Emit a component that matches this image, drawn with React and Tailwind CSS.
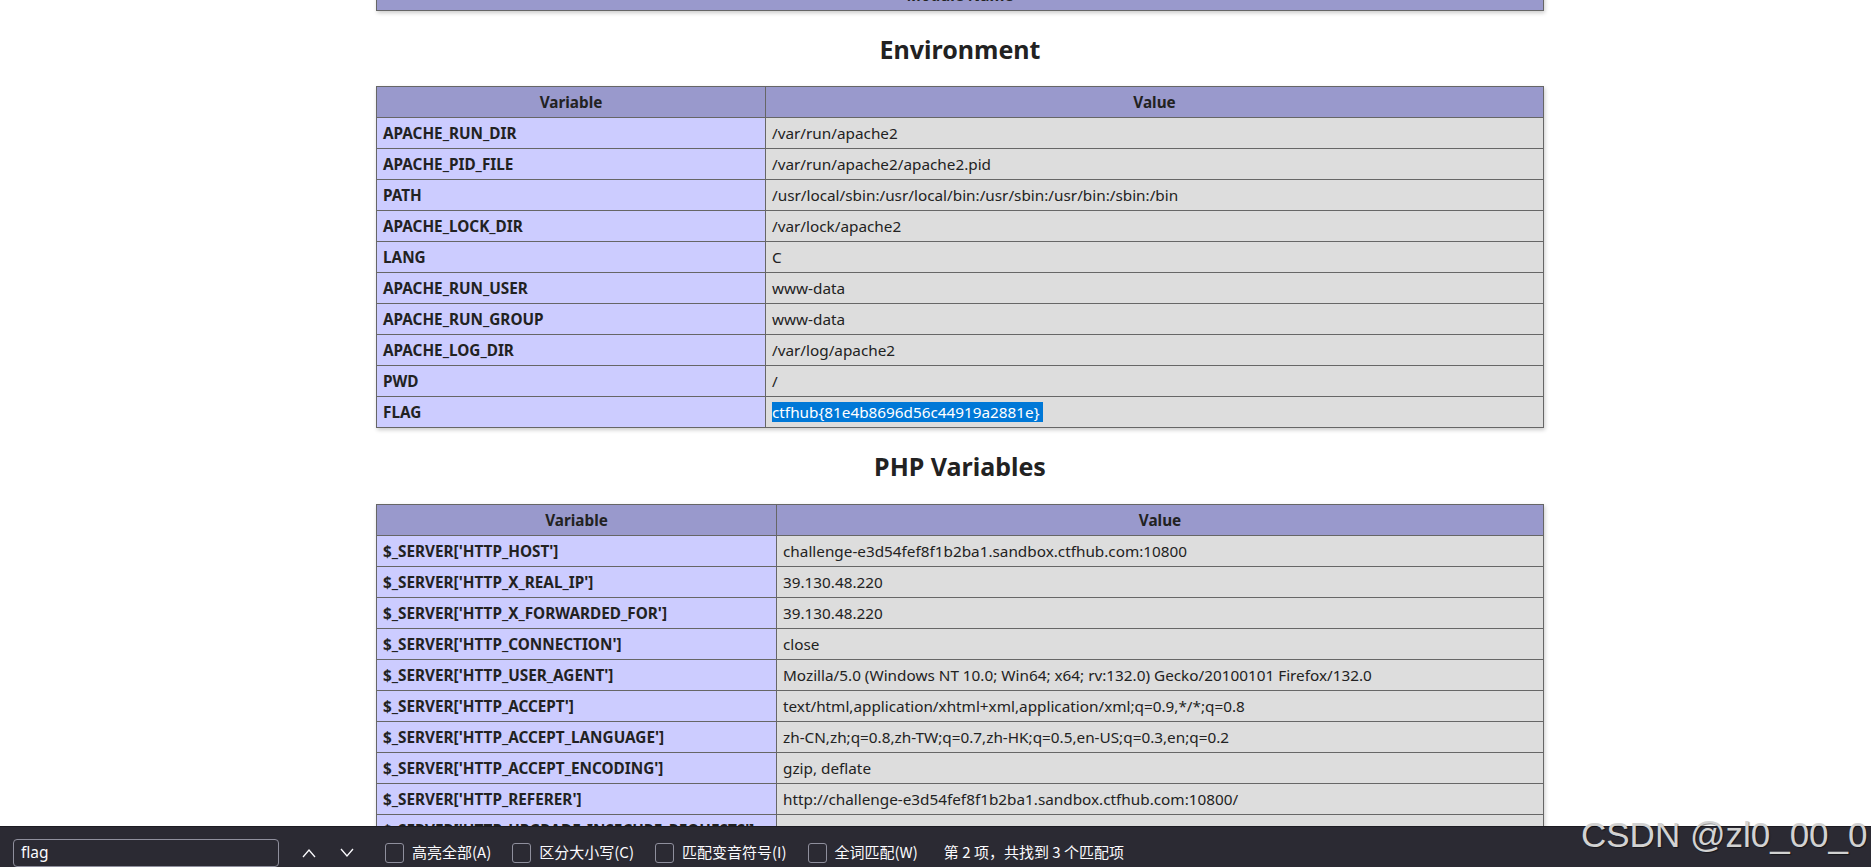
import React from 'react';

const envRows = [
  ['APACHE_RUN_DIR', '/var/run/apache2'],
  ['APACHE_PID_FILE', '/var/run/apache2/apache2.pid'],
  ['PATH', '/usr/local/sbin:/usr/local/bin:/usr/sbin:/usr/bin:/sbin:/bin'],
  ['APACHE_LOCK_DIR', '/var/lock/apache2'],
  ['LANG', 'C'],
  ['APACHE_RUN_USER', 'www-data'],
  ['APACHE_RUN_GROUP', 'www-data'],
  ['APACHE_LOG_DIR', '/var/log/apache2'],
  ['PWD', '/'],
  ['FLAG', 'ctfhub{81e4b8696d56c44919a2881e}'],
];

const phpRows = [
  ["$_SERVER['HTTP_HOST']", 'challenge-e3d54fef8f1b2ba1.sandbox.ctfhub.com:10800'],
  ["$_SERVER['HTTP_X_REAL_IP']", '39.130.48.220'],
  ["$_SERVER['HTTP_X_FORWARDED_FOR']", '39.130.48.220'],
  ["$_SERVER['HTTP_CONNECTION']", 'close'],
  ["$_SERVER['HTTP_USER_AGENT']", 'Mozilla/5.0 (Windows NT 10.0; Win64; x64; rv:132.0) Gecko/20100101 Firefox/132.0'],
  ["$_SERVER['HTTP_ACCEPT']", 'text/html,application/xhtml+xml,application/xml;q=0.9,*/*;q=0.8'],
  ["$_SERVER['HTTP_ACCEPT_LANGUAGE']", 'zh-CN,zh;q=0.8,zh-TW;q=0.7,zh-HK;q=0.5,en-US;q=0.3,en;q=0.2'],
  ["$_SERVER['HTTP_ACCEPT_ENCODING']", 'gzip, deflate'],
  ["$_SERVER['HTTP_REFERER']", 'http://challenge-e3d54fef8f1b2ba1.sandbox.ctfhub.com:10800/'],
  ["$_SERVER['HTTP_UPGRADE_INSECURE_REQUESTS']", '1'],
  ["$_SERVER['HTTP_PRIORITY']", 'u=0, i'],
  ["$_SERVER['PATH']", '/usr/local/sbin:/usr/local/bin:/usr/sbin:/usr/bin:/sbin:/bin'],
];

const cell = 'border border-[#666666] px-[6px] py-[5px] leading-[20px] align-baseline';

function InfoTable({ rows, firstCol, highlight }) {
  return (
    <table className="w-[1168px] border-collapse shadow-[1px_2px_4px_#cccccc]">
      <thead>
        <tr className="bg-[#9999cc]">
          <th className={`${cell} font-bold text-center`} style={{ width: firstCol }}>Variable</th>
          <th className={`${cell} font-bold text-center`}>Value</th>
        </tr>
      </thead>
      <tbody>
        {rows.map(([k, v]) => (
          <tr key={k}>
            <td className={`${cell} bg-[#ccccff] font-bold`}>{k}</td>
            <td className={`${cell} bg-[#dddddd]`}>
              {highlight === k ? (
                <span className="bg-[#0078d7] text-white pr-[3px]">{v}</span>
              ) : v}
            </td>
          </tr>
        ))}
      </tbody>
    </table>
  );
}

function Check({ label }) {
  return (
    <div className="flex items-center gap-[8px]">
      <span className="w-[19px] h-[20px] rounded-[3px] border border-[#8f8f9d]" />
      <span>{label}</span>
    </div>
  );
}

export default function App() {
  return (
    <div className="relative w-[1871px] h-[867px] overflow-hidden bg-white text-[#222222] text-[15.3px] font-['Noto_Sans','Open_Sans',sans-serif]">
      <div className="ml-[376px] w-[1168px] -mt-[21px]">
        {/* tail of the previous section */}
        <table className="w-[1168px] border-collapse shadow-[1px_2px_4px_#cccccc]">
          <thead>
            <tr className="bg-[#9999cc]">
              <th className={`${cell} font-bold text-center`}>Module Name</th>
            </tr>
          </thead>
        </table>

        <h2 className="text-[25px] font-bold leading-[34px] mt-[21px] mb-[20px] text-center">Environment</h2>
        <InfoTable rows={envRows} firstCol="389px" highlight="FLAG" />

        <h2 className="text-[25px] font-bold leading-[34px] mt-[21px] mb-[21px] text-center">PHP Variables</h2>
        <InfoTable rows={phpRows} firstCol="400px" />
      </div>

      {/* firefox find bar */}
      <div className="absolute left-0 right-0 bottom-0 h-[41px] pt-[11px] bg-[#2b2a33] border-t border-[#1c1b22] flex items-center text-[#fbfbfe] text-[15px] font-['Noto_Sans','Noto_Sans_CJK_SC',sans-serif]">
        <div className="ml-[13px] w-[266px] h-[28px] rounded-[4px] border border-[#8f8f9d] flex items-center px-[7px] text-[15.5px]">
          flag
        </div>
        <div className="ml-[22px] flex items-center gap-[22px]">
          <svg width="16" height="10" viewBox="0 0 16 10" fill="none" stroke="#fbfbfe" strokeWidth="1.3">
            <path d="M2 9 L8 2 L14 9" />
          </svg>
          <svg width="16" height="10" viewBox="0 0 16 10" fill="none" stroke="#fbfbfe" strokeWidth="1.3">
            <path d="M2 1 L8 8 L14 1" />
          </svg>
        </div>
        <div className="ml-[30px] flex items-center gap-[21px] font-['Noto_Sans_CJK_SC',sans-serif]">
          <Check label="高亮全部(A)" />
          <Check label="区分大小写(C)" />
          <Check label="匹配变音符号(I)" />
          <Check label="全词匹配(W)" />
        </div>
        <span className="ml-[26px] font-['Noto_Sans_CJK_SC',sans-serif]">第 2 项，共找到 3 个匹配项</span>
      </div>

      {/* watermark */}
      <div className="absolute left-[1581px] top-[815px] text-[35px] leading-[40px] text-[#d2d2d2] font-['Liberation_Sans',sans-serif] [text-shadow:1px_1px_1px_rgba(0,0,0,0.45)]">
        CSDN @zl0_00_0
      </div>
    </div>
  );
}
